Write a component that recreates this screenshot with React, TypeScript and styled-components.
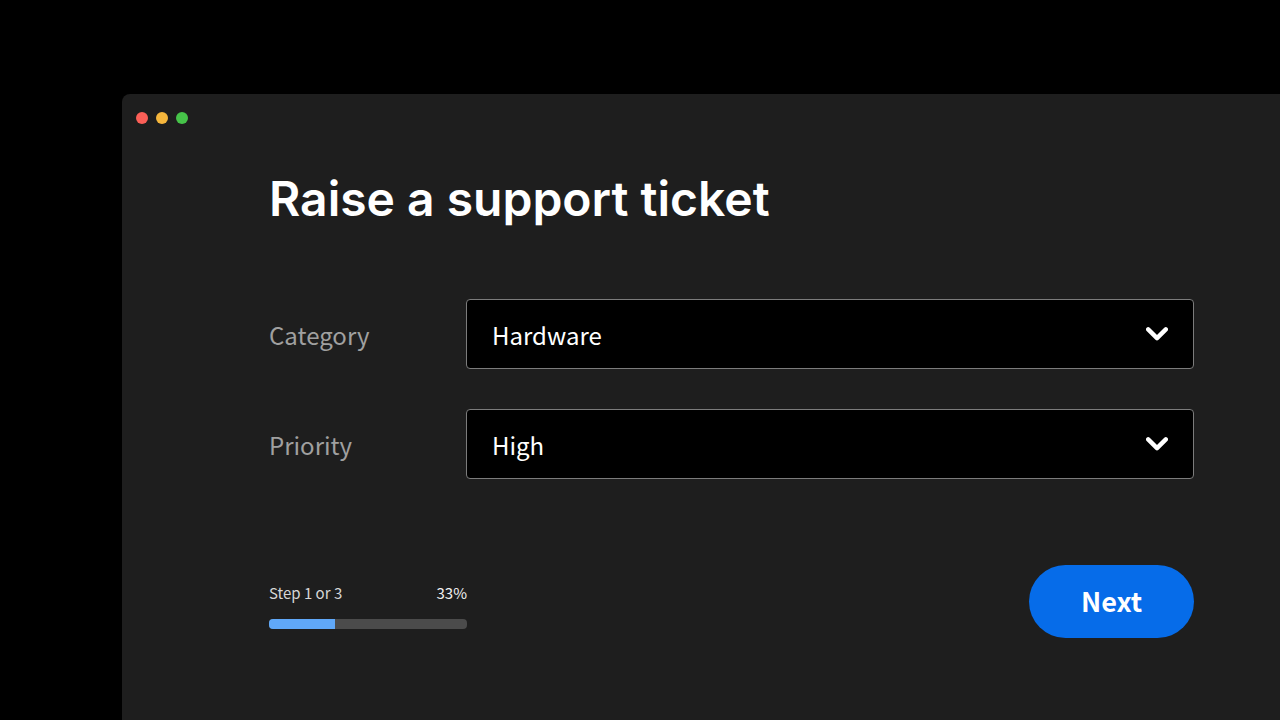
import React, { useState } from "react";
import styled, { createGlobalStyle } from "styled-components";

const GlobalStyle = createGlobalStyle`
  *, *::before, *::after { box-sizing: border-box; }
  body {
    margin: 0;
    background: #000;
    color: #fff;
    font-family: "Noto Sans CJK SC", "Noto Sans", sans-serif;
  }
`;

const Desktop = styled.div`
  display: flex;
  min-height: 100vh;
  padding: 94px 0 0 122px;
`;

const AppWindow = styled.main`
  flex: 1;
  min-width: 0;
  padding: 18px 86px 80px 14px;
  background: #1e1e1e;
  border-top-left-radius: 8px;
`;

const TrafficLights = styled.div`
  display: flex;
  gap: 8px;
`;

const Light = styled.span<{ $color: string }>`
  width: 12px;
  height: 12px;
  border-radius: 50%;
  background: ${({ $color }) => $color};
`;

const TicketForm = styled.form`
  padding: 46px 0 0 133px;
`;

const Title = styled.h1`
  margin: 0 0 71px;
  font-family: Inter, sans-serif;
  font-size: 48px;
  font-weight: 600;
  line-height: 58px;
`;

const Fields = styled.div`
  display: flex;
  flex-direction: column;
  gap: 40px;
`;

const Field = styled.div`
  display: grid;
  grid-template-columns: 197px minmax(0, 1fr);
  align-items: center;
`;

const FieldLabel = styled.label`
  padding-top: 2px;
  color: #a0a0a0;
  font-size: 24px;
  line-height: 36px;
`;

const SelectWrap = styled.div`
  position: relative;
`;

const Select = styled.select`
  display: block;
  appearance: none;
  width: 100%;
  height: 70px;
  padding: 2px 72px 0 25px;
  border: 1px solid #7c7c7c;
  border-radius: 4px;
  background: #000;
  color: #fff;
  font-family: inherit;
  font-size: 24px;
  line-height: 36px;
  cursor: pointer;
`;

const Chevron = styled.svg`
  position: absolute;
  top: 28px;
  right: 26px;
  width: 22px;
  height: 14px;
  pointer-events: none;
`;

const Footer = styled.div`
  display: flex;
  align-items: center;
  justify-content: space-between;
  margin-top: 86px;
`;

const Step = styled.div`
  width: 198px;
  padding-top: 8px;
`;

const StepText = styled.div`
  display: flex;
  justify-content: space-between;
  margin-bottom: 15px;
  color: #d6d6d6;
  font-size: 15px;
  line-height: 22px;
`;

const Percent = styled.span`
  color: #f2f2f2;
`;

const Progress = styled.progress`
  display: block;
  appearance: none;
  width: 100%;
  height: 10px;
  overflow: hidden;
  border: 0;
  border-radius: 4px;
  background: #4b4b4b;

  &::-webkit-progress-bar { background: #4b4b4b; }
  &::-webkit-progress-value { background: #60a8f8; }
  &::-moz-progress-bar { background: #60a8f8; }
`;

const NextButton = styled.button`
  width: 165px;
  height: 73px;
  padding: 0 0 2px;
  border: 0;
  border-radius: 37px;
  background: #066ce9;
  color: #fff;
  font-family: inherit;
  font-size: 27px;
  font-weight: 700;
  line-height: 36px;
  cursor: pointer;
`;

type DropdownProps = {
  id: string;
  label: string;
  options: string[];
};

function Dropdown({ id, label, options }: DropdownProps) {
  const [value, setValue] = useState(options[0]);
  return (
    <Field>
      <FieldLabel htmlFor={id}>{label}</FieldLabel>
      <SelectWrap>
        <Select id={id} value={value} onChange={(e) => setValue(e.target.value)}>
          {options.map((option) => (
            <option key={option}>{option}</option>
          ))}
        </Select>
        <Chevron viewBox="0 0 22 14" fill="none" aria-hidden="true">
          <path
            d="M2.2 2.4 11 11.1 19.8 2.4"
            stroke="#fff"
            strokeWidth="4.4"
            strokeLinecap="round"
            strokeLinejoin="round"
          />
        </Chevron>
      </SelectWrap>
    </Field>
  );
}

export default function App() {
  return (
    <>
      <GlobalStyle />
      <Desktop>
        <AppWindow>
          <TrafficLights>
            <Light $color="#fb5f57" />
            <Light $color="#f5b63c" />
            <Light $color="#46c349" />
          </TrafficLights>
          <TicketForm onSubmit={(e) => e.preventDefault()}>
            <Title>Raise a support ticket</Title>
            <Fields>
              <Dropdown id="category" label="Category" options={["Hardware"]} />
              <Dropdown id="priority" label="Priority" options={["High"]} />
            </Fields>
            <Footer>
              <Step>
                <StepText>
                  <label htmlFor="progress">Step 1 or 3</label>
                  <Percent>33%</Percent>
                </StepText>
                <Progress id="progress" value={1} max={3} />
              </Step>
              <NextButton type="submit">Next</NextButton>
            </Footer>
          </TicketForm>
        </AppWindow>
      </Desktop>
    </>
  );
}
